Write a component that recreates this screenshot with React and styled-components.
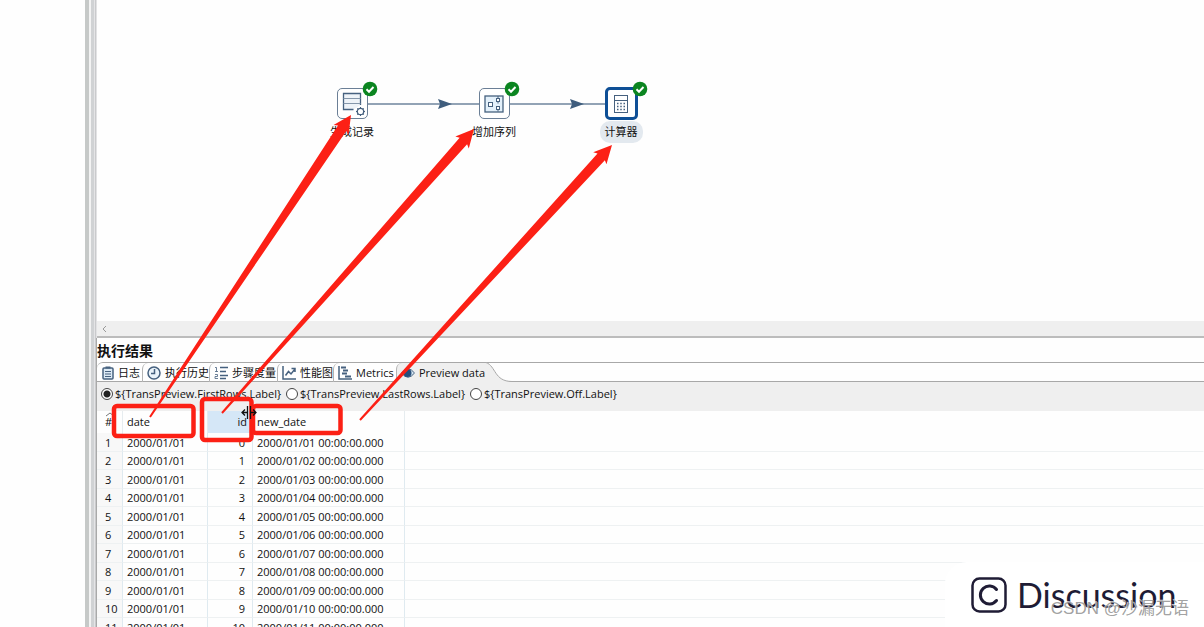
import React, { useState } from "react";
import styled, { createGlobalStyle } from "styled-components";

const GlobalStyle = createGlobalStyle`
  body {
    margin: 0;
    overflow: hidden;
    font-family: "Open Sans", "Noto Sans CJK SC", sans-serif;
    font-size: 11px;
    color: #111;
  }
`;

const Page = styled.div`
  position: relative;
  display: flex;
  width: 100%;
  height: 100vh;
  overflow: hidden;
  background: #fefefe;
`;

const Sidebar = styled.aside`
  flex: 0 0 85px;
`;

const Splitter = styled.div`
  flex: 0 0 12px;
  box-sizing: border-box;
  background: linear-gradient(
    to right,
    #c6c9c8 0 4px,
    #f3f3f3 4px 6px,
    #d0d2d4 6px 9px,
    #e4e4e6 9px 10px,
    #c9cacc 10px 11px,
    #e2e2e4 11px 12px
  );
`;

const Main = styled.main`
  display: flex;
  flex: 1;
  flex-direction: column;
  min-width: 0;
`;

const Canvas = styled.section`
  position: relative;
  flex: 1;
  min-height: 0;
`;

const Hops = styled.svg`
  position: absolute;
  top: 0;
  left: 0;
  width: 100%;
  height: 100%;
`;

/* A step is centred on its x position on the canvas */
const Step = styled.div`
  position: absolute;
  left: ${(props) => props.$x}px;
  top: 87px;
  display: flex;
  flex-direction: column;
  align-items: center;
  gap: 1px;
  width: 60px;
  margin-left: -30px;
`;

const StepBox = styled.div`
  position: relative;
  box-sizing: border-box;
  width: ${(props) => (props.$selected ? 33 : 31)}px;
  height: ${(props) => (props.$selected ? 33 : 31)}px;
  margin: ${(props) => (props.$selected ? 0 : 1)}px;
  border: ${(props) => (props.$selected ? "3px solid #0e4f96" : "1px solid #6b7f96")};
  border-radius: 5px;
  background: #fff;
  display: flex;
  align-items: center;
  justify-content: center;
`;

const StepCheck = styled.svg`
  position: absolute;
  top: ${(props) => (props.$selected ? -9 : -8)}px;
  right: ${(props) => (props.$selected ? -13 : -11)}px;
`;

const StepLabel = styled.span`
  padding: 2px 5px;
  border-radius: 10px;
  line-height: 18px;
  white-space: nowrap;
  background: ${(props) => (props.$selected ? "#e3e9ef" : "transparent")};
`;

const ScrollTrack = styled.div`
  display: flex;
  flex: none;
  align-items: center;
  height: 15px;
  padding-left: 4px;
  background: #efefef;
  border-bottom: 2px solid #bcbcbc;
`;

const Results = styled.section`
  display: flex;
  flex-direction: column;
  flex: 0 0 289px;
  overflow: hidden;
  border-left: 1px solid #a9a9a9;
  margin-left: -1px;
`;

const Title = styled.h2`
  flex: none;
  margin: 0;
  height: 24px;
  line-height: 25px;
  font-size: 14px;
  font-weight: 700;
`;

const TabBar = styled.div`
  display: flex;
  flex: none;
  height: 18px;
  border-top: 1px solid #a8a8a8;
  border-bottom: 1px solid #a8a8a8;
  border-top-left-radius: 6px;
`;

const Tab = styled.button`
  display: flex;
  align-items: center;
  gap: 4px;
  box-sizing: border-box;
  width: ${(props) => props.$width}px;
  height: 19px;
  padding: 1px 0 0 4px;
  border: 0;
  border-left: 1px solid ${(props) => (props.$first ? "transparent" : "#b4b4b4")};
  border-top-left-radius: 6px;
  background: ${(props) => (props.$active ? "#efefef" : "transparent")};
  font: inherit;
  color: inherit;
  white-space: nowrap;
  line-height: 18px;
  text-align: left;

  svg {
    flex: none;
  }
`;

const TabCurve = styled.svg`
  display: block;
  flex: none;
  margin-top: -1px;
  margin-bottom: -1px;
`;

const Options = styled.form`
  display: flex;
  flex: none;
  gap: 5px;
  height: 29px;
  padding: 0 4px;
  background: #efefef;
`;

const Option = styled.label`
  display: flex;
  align-items: center;
  gap: 2px;
  height: 23px;
  white-space: nowrap;
`;

const Radio = styled.input`
  appearance: none;
  box-sizing: border-box;
  width: 12px;
  height: 12px;
  margin: 0;
  border: 1px solid #444;
  border-radius: 50%;
  background: #fff;

  &:checked {
    background: radial-gradient(circle, #222 0 3px, #fff 4px);
  }
`;

const Grid = styled.table`
  flex: none;
  width: 100%;
  table-layout: fixed;
  border-collapse: separate;
  border-spacing: 0;
`;

const HeadCell = styled.th`
  box-sizing: border-box;
  height: 22px;
  padding: ${(props) => (props.$narrow ? "0 0 0 8px" : "0 5px 0 4px")};
  border-right: 1px solid ${(props) => (props.$last ? "transparent" : "#e6ecef")};
  background: ${(props) => (props.$active ? "#d5e7f7" : "#fefefe")};
  font-weight: 400;
  line-height: 20px;
  text-align: ${(props) => props.$align || "left"};
`;

const Row = styled.tr`
  height: 18px;

  &:nth-child(odd) {
    height: 19px;
  }
`;

const Cell = styled.td`
  box-sizing: border-box;
  padding: ${(props) => (props.$narrow ? "0 0 0 8px" : "0 7px 0 4px")};
  border-right: 1px solid ${(props) => (props.$last ? "transparent" : "#dfeaf0")};
  border-bottom: 1px solid #eef1f2;
  background: ${(props) => (props.$narrow ? "#f8f8f8" : "#fefefe")};
  line-height: 17px;
  text-align: ${(props) => props.$align || "left"};
  white-space: nowrap;
`;

const Markup = styled.svg`
  position: absolute;
  top: 0;
  left: 0;
  width: 100%;
  height: 100%;
  pointer-events: none;
`;

const Badge = styled.div`
  position: absolute;
  right: 0;
  bottom: 0;
  display: flex;
  align-items: center;
  gap: 10px;
  box-sizing: border-box;
  width: 259px;
  height: 65px;
  padding-left: 26px;
  border-top-left-radius: 22px;
  background: #fff;
  color: #1f1c35;
  font-family: Lato, sans-serif;
  font-size: 34px;
`;

const Credit = styled.span`
  position: absolute;
  right: 15px;
  bottom: 6px;
  font-family: "Liberation Sans", "Noto Sans CJK SC", sans-serif;
  font-size: 17px;
  line-height: 24px;
  color: rgba(150, 150, 150, 0.9);
  text-shadow: -1px -1px 0 rgba(255, 255, 255, 0.7);
  white-space: nowrap;
`;

const ink = "#46617f";

const RecordsIcon = () => (
  <svg width="27" height="27" viewBox="0 0 27 27" fill="none" stroke={ink}>
    <path d="M14.5 19.5H4.500V3.500H21.500V15" fill="#eef3f8" strokeWidth="1.300" />
    <path d="M4.500 8.500h17M4.500 13.500h17" stroke="#8496aa" />
    <circle cx="21.500" cy="21.500" r="3.200" fill="#fff" strokeWidth="1.300" />
    <path d="M21.500 17v1M21.500 25v1M17 21.500h1M25 21.500h1M18.300 18.300l.7.700M24 24l.7.700M24.700 18.300l-.7.700M18.300 24.700l.7-.7" />
  </svg>
);

const SequenceIcon = () => (
  <svg width="20" height="18" viewBox="0 0 20 18" fill="none" stroke={ink}>
    <rect x="1" y="1" width="18" height="16" fill="#e3f0fa" strokeWidth="1.300" />
    <rect x="4.500" y="7.500" width="4" height="4" fill="#fff" />
    <rect x="12.500" y="3.500" width="3" height="3" fill="#fff" />
    <rect x="12.500" y="11.500" width="3" height="3" fill="#fff" />
    <path d="M14 1v2M14 6.500v2M14 14.500v2" />
  </svg>
);

const CalculatorIcon = () => (
  <svg width="16" height="20" viewBox="0 0 16 20" fill="none" stroke={ink}>
    <rect x="1.500" y="1.500" width="13" height="17" />
    <path d="M1.500 6.500h13" />
    <path d="M4 9.500h8M4 12.500h8M4 15.500h8" strokeWidth="1.500" strokeDasharray="1.500 1.750" />
  </svg>
);

const LogIcon = () => (
  <svg width="12" height="14" viewBox="0 0 12 14" fill="none" stroke={ink}>
    <rect x="1" y="2" width="10" height="11" rx="1" fill="#dceaf5" strokeWidth="1.500" />
    <path d="M3.500 1.500h5" strokeWidth="2" />
    <path d="M3 5.500h6M3 8h6M3 10.500h6" />
  </svg>
);

const HistoryIcon = () => (
  <svg width="14" height="14" viewBox="0 0 14 14" fill="none" stroke={ink} strokeWidth="1.500">
    <circle cx="7" cy="7" r="6" fill="#eaf3fa" />
    <path d="M7.500 3v4.500H4" />
  </svg>
);

const MetricsStepIcon = () => (
  <svg width="14" height="14" viewBox="0 0 14 14" fill="none" stroke={ink}>
    <path d="M6 1.500h8M6 5.500h6M6 9.500h8M6 12.500h6" strokeWidth="1.300" />
    <path d="M1 1.500h1.500v4M1 5.500h3M1 8.500h2.500v2H1v2h3" strokeWidth=".8" />
  </svg>
);

const ChartIcon = () => (
  <svg width="14" height="14" viewBox="0 0 14 14" fill="none" stroke={ink} strokeWidth="1.500">
    <path d="M1 0v13h13" />
    <path d="M3.500 9.500l3-4 2.500 2.500 4-5M9.500 2.500H13V6" />
  </svg>
);

const GanttIcon = () => (
  <svg width="14" height="14" viewBox="0 0 14 14" fill="none" stroke={ink} strokeWidth="1.500">
    <path d="M1 0v13h13" />
    <path d="M3 1.500h5M5 4.500h5M4 7.500h5M7 10.500h6" strokeWidth="2" />
  </svg>
);

const EyeIcon = () => (
  <svg width="14" height="12" viewBox="0 0 14 12">
    <path d="M.5 6Q7-2.500 13.500 6Q7 14.500.5 6z" fill="#d5e6f3" stroke={ink} />
    <circle cx="6.500" cy="6" r="4" fill="#274f7c" />
  </svg>
);

const steps = [
  { x: 255, label: "生成记录", Icon: RecordsIcon },
  { x: 397, label: "增加序列", Icon: SequenceIcon },
  { x: 524, label: "计算器", Icon: CalculatorIcon, selected: true },
];

const tabs = [
  { label: "日志", width: 45, Icon: LogIcon },
  { label: "执行历史", width: 67, Icon: HistoryIcon },
  { label: "步骤度量", width: 68, Icon: MetricsStepIcon },
  { label: "性能图", width: 56, Icon: ChartIcon },
  { label: "Metrics", width: 63, Icon: GanttIcon },
  { label: "Preview data", width: 90, Icon: EyeIcon },
];

const options = ["FirstRows", "LastRows", "Off"];

const rows = Array.from({ length: 12 }, (_, i) => ({
  nr: i + 1,
  date: "2000/01/01",
  id: i,
  newDate: `2000/01/${String(i + 1).padStart(2, "0")} 00:00:00.000`,
}));

// Tapered arrow: a fine tail that widens up to the head
const arrowPoints = (x1, y1, x2, y2) => {
  const length = Math.hypot(x2 - x1, y2 - y1);
  const ux = (x2 - x1) / length;
  const uy = (y2 - y1) / length;
  const at = (back, side) => `${x2 - ux * back - uy * side},${y2 - uy * back + ux * side}`;
  return [
    at(length, 1),
    at(16, 5),
    at(18, 9),
    at(0, 0),
    at(18, -9),
    at(16, -5),
    at(length, -1),
  ].join(" ");
};

const App = () => {
  const [activeTab, setActiveTab] = useState("Preview data");
  const [preview, setPreview] = useState("FirstRows");

  return (
    <Page>
      <GlobalStyle />
      <Sidebar />
      <Splitter />
      <Main>
        <Canvas>
          <Hops>
            <path d="M271 104H382M413 104H508" stroke="#6f859d" strokeWidth="1.500" />
            <path d="M341 99l14 5-14 5 2-5zM473 99l14 5-14 5 2-5z" fill="#3f5d7d" />
          </Hops>
          {steps.map(({ x, label, Icon, selected }) => (
            <Step key={label} $x={x}>
              <StepBox $selected={selected}>
                <Icon />
                <StepCheck $selected={selected} width="16" height="16" viewBox="0 0 16 16">
                  <circle cx="8" cy="8" r="7.300" fill="#0b8520" />
                  <path d="M4.500 8.200l2.500 2.500 4.500-4.700" fill="none" stroke="#fff" strokeWidth="2" />
                </StepCheck>
              </StepBox>
              <StepLabel $selected={selected}>{label}</StepLabel>
            </Step>
          ))}
        </Canvas>
        <ScrollTrack>
          <svg width="7" height="8" viewBox="0 0 7 8" fill="none" stroke="#999">
            <path d="M5 1L2 4l3 3" />
          </svg>
        </ScrollTrack>
        <Results>
          <Title>执行结果</Title>
          <TabBar role="tablist">
            {tabs.map(({ label, width, Icon }, i) => (
              <Tab
                key={label}
                type="button"
                role="tab"
                aria-selected={activeTab === label}
                $active={activeTab === label}
                $first={i === 0}
                $width={width}
                onClick={() => setActiveTab(label)}
              >
                <Icon />
                {label}
              </Tab>
            ))}
            <TabCurve width="26" height="20" viewBox="0 0 26 20">
              <path d="M0 0.500C10 4 8 19.500 26 19.500V20H0z" fill="#efefef" />
              <path d="M0 0.500C10 4 8 19.500 26 19.500" fill="none" stroke="#a8a8a8" />
            </TabCurve>
          </TabBar>
          <Options>
            {options.map((name) => (
              <Option key={name}>
                <Radio
                  type="radio"
                  name="preview"
                  checked={preview === name}
                  onChange={() => setPreview(name)}
                />
                {`\${TransPreview.${name}.Label}`}
              </Option>
            ))}
          </Options>
          <Grid>
            <colgroup>
              <col width="26" />
              <col width="85" />
              <col width="45" />
              <col width="152" />
              <col />
            </colgroup>
            <thead>
              <tr>
                <HeadCell $narrow>#</HeadCell>
                <HeadCell>date</HeadCell>
                <HeadCell $align="right" $active>id</HeadCell>
                <HeadCell>new_date</HeadCell>
                <HeadCell $last />
              </tr>
            </thead>
            <tbody>
              {rows.map((row) => (
                <Row key={row.nr}>
                  <Cell $narrow>{row.nr}</Cell>
                  <Cell>{row.date}</Cell>
                  <Cell $align="right">{row.id}</Cell>
                  <Cell>{row.newDate}</Cell>
                  <Cell $last />
                </Row>
              ))}
            </tbody>
          </Grid>
        </Results>
      </Main>

      <Markup>
        <path d="M106 416l4-3 4 3" fill="none" stroke="#777" />
        <g fill="none" stroke="#fc2015" strokeWidth="4.500">
          <rect x="114" y="406" width="79.500" height="30" rx="3" />
          <rect x="202" y="399" width="49.500" height="41" rx="3" />
          <rect x="253" y="406" width="87.500" height="27" rx="3" />
        </g>
        <g fill="#fc2015">
          <polygon points={arrowPoints(150, 417, 351, 115)} />
          <polygon points={arrowPoints(222, 413, 474, 129)} />
          <polygon points={arrowPoints(360, 420, 612, 145)} />
        </g>
        <path
          d="M247.500 406v13M250.500 406v13M242 412.500h5M251 412.500h5M245 409.500l-3 3 3 3M253 409.500l3 3-3 3"
          fill="none"
          stroke="#111"
          strokeWidth="1.300"
        />
      </Markup>

      <Badge>
        <svg width="36" height="36" viewBox="0 0 36 36" fill="none" stroke="#1f1c35" strokeWidth="2.500">
          <rect x="1.500" y="1.500" width="33" height="33" rx="7" />
          <path d="M25.500 12.500A9 9 0 1 0 25.500 23.500" strokeWidth="3" strokeLinecap="round" />
        </svg>
        Discussion
        <Credit>CSDN @沙漏无语</Credit>
      </Badge>
    </Page>
  );
};

export default App;
